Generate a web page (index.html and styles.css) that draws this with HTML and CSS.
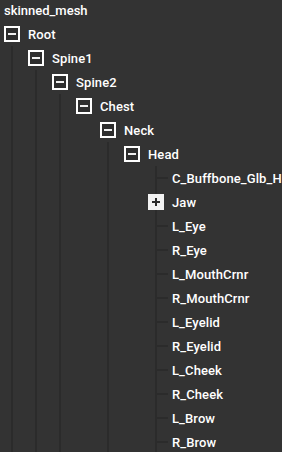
FILE: index.html
```html
<!DOCTYPE html>
<html lang="en">
<head>
<meta charset="UTF-8" />
<meta name="viewport" content="width=device-width, initial-scale=1" />
<title>Skeleton</title>
<link rel="stylesheet" href="styles.css">
</head>
<body>
  <div class="outliner">
    <div class="title">skinned_mesh</div>

    <ul class="tree">
      <li>
        <div class="row"><span class="toggle open"></span><span class="label">Root</span></div>
        <ul class="children guide">
          <li>
            <div class="row"><span class="toggle open"></span><span class="label">Spine1</span></div>
            <ul class="children guide">
              <li>
                <div class="row"><span class="toggle open"></span><span class="label">Spine2</span></div>
                <ul class="children guide">
                  <li>
                    <div class="row"><span class="toggle open"></span><span class="label">Chest</span></div>
                    <ul class="children">
                      <li>
                        <div class="row"><span class="toggle open"></span><span class="label">Neck</span></div>
                        <ul class="children guide">
                          <li>
                            <div class="row"><span class="toggle open"></span><span class="label">Head</span></div>
                            <ul class="leaves">
                              <li class="row"><span class="stub"></span><span class="label">C_Buffbone_Glb_Hi</span></li>
                              <li class="row"><span class="toggle closed"></span><span class="label">Jaw</span></li>
                              <li class="row"><span class="stub"></span><span class="label">L_Eye</span></li>
                              <li class="row"><span class="stub"></span><span class="label">R_Eye</span></li>
                              <li class="row"><span class="stub"></span><span class="label">L_MouthCrnr</span></li>
                              <li class="row"><span class="stub"></span><span class="label">R_MouthCrnr</span></li>
                              <li class="row"><span class="stub"></span><span class="label">L_Eyelid</span></li>
                              <li class="row"><span class="stub"></span><span class="label">R_Eyelid</span></li>
                              <li class="row"><span class="stub"></span><span class="label">L_Cheek</span></li>
                              <li class="row"><span class="stub"></span><span class="label">R_Cheek</span></li>
                              <li class="row"><span class="stub"></span><span class="label">L_Brow</span></li>
                              <li class="row"><span class="stub"></span><span class="label">R_Brow</span></li>
                            </ul>
                          </li>
                        </ul>
                      </li>
                    </ul>
                  </li>
                </ul>
              </li>
            </ul>
          </li>
        </ul>
      </li>
    </ul>
  </div>
</body>
</html>
```

FILE: styles.css
```css
html, body {
  margin: 0;
  height: 100%;
  overflow: hidden;
}
body {
  background: #333333;
  color: #ffffff;
  font-family: Roboto, 'Liberation Sans', sans-serif;
  font-weight: 500;
  font-size: 13px;
}
.outliner {
  padding: 0 0 0 4px;
  white-space: nowrap;
}
.title {
  height: 22px;
  line-height: 22px;
}
ul {
  list-style: none;
  margin: 0;
  padding: 0;
}
.row {
  display: flex;
  align-items: center;
  height: 24px;
}
.children {
  margin-left: 7px;
  border-left: 2px solid transparent;
  padding-left: 15px;
}
.children.guide {
  border-left-color: #2b2b2b;
}
.leaves {
  margin-left: 31px;
  border-left: 2px solid #2b2b2b;
}
.label {
  letter-spacing: 0.1px;
}
.toggle {
  box-sizing: border-box;
  width: 16px;
  height: 16px;
  margin-right: 8px;
  flex: none;
  display: flex;
  align-items: center;
  justify-content: center;
}
.toggle.open {
  border: 2px solid #ffffff;
  background: #2e2e2e;
}
.toggle.open::before {
  content: "";
  width: 8px;
  height: 2px;
  background: #f0f0f0;
}
.toggle.closed {
  background: #f2f2f2;
  margin-left: -9px;
  position: relative;
}
.toggle.closed::before,
.toggle.closed::after {
  content: "";
  position: absolute;
  left: 4px;
  top: 7px;
  width: 8px;
  height: 2px;
  background: #2a2a2a;
}
.toggle.closed::after {
  left: 7px;
  top: 4px;
  width: 2px;
  height: 8px;
}
.stub {
  width: 11px;
  height: 2px;
  margin-right: 4px;
  background: #2b2b2b;
  flex: none;
}
```
